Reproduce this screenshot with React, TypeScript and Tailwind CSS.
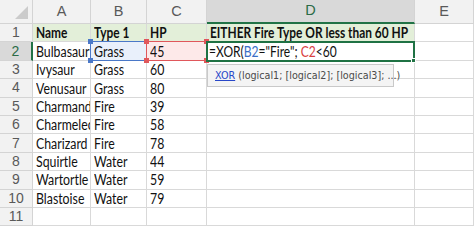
import React from "react";

const rows: [string, string, string, string][] = [
  ["Name", "Type 1", "HP", "EITHER Fire Type OR less than 60 HP"],
  ["Bulbasaur", "Grass", "45", ""],
  ["Ivysaur", "Grass", "60", ""],
  ["Venusaur", "Grass", "80", ""],
  ["Charmander", "Fire", "39", ""],
  ["Charmeleon", "Fire", "58", ""],
  ["Charizard", "Fire", "78", ""],
  ["Squirtle", "Water", "44", ""],
  ["Wartortle", "Water", "59", ""],
  ["Blastoise", "Water", "79", ""],
  ["", "", "", ""],
];

const cellFont = { fontFamily: "Lato, 'Open Sans', sans-serif" };

function Handle({ cls }: { cls: string }) {
  return <div className={`absolute w-[5px] h-[5px] ${cls}`} />;
}

function CellText({ children, bold }: { children: React.ReactNode; bold?: boolean }) {
  return (
    <div className="absolute inset-0 overflow-hidden flex items-center pl-[3px] pt-[1px]">
      <span
        className={`inline-block origin-left whitespace-nowrap text-[14.5px] text-[#111] ${
          bold ? "font-bold scale-x-[0.82]" : "scale-x-[0.85]"
        }`}
        style={cellFont}
      >
        {children}
      </span>
    </div>
  );
}

export default function App() {
  return (
    <div className="w-[474px] h-[226px] overflow-hidden bg-white select-none">
      <div
        className="grid w-[474px]"
        style={{
          gridTemplateColumns: "33px 58px 56px 60px 208px 59px",
          gridTemplateRows: "24px repeat(11, 18.4px)",
        }}
      >
        {/* header row */}
        <div className="relative bg-[#f2f2f2] border-r border-b border-[#d4d4d4]">
          <div className="absolute right-[4px] bottom-[4px] w-0 h-0 border-l-[13px] border-l-transparent border-b-[13px] border-b-[#cbcbcb]" />
        </div>
        {["A", "B", "C", "D", "E"].map((c) => (
          <div
            key={c}
            className={`flex items-center justify-center text-[14.5px] border-r border-[#d4d4d4] ${
              c === "D"
                ? "bg-[#d9d9d9] text-[#2b6b46] border-b-2 border-b-[#217346]"
                : "bg-[#f2f2f2] text-[#595959] border-b border-b-[#d4d4d4]"
            }`}
            style={{ fontFamily: "'Liberation Sans', Arial, sans-serif" }}
          >
            {c}
          </div>
        ))}
        {rows.map((r, i) => {
          const rn = i + 1;
          const isSel = rn === 2;
          return (
            <React.Fragment key={rn}>
              <div
                className={`flex items-center justify-center text-[14px] border-b border-[#d4d4d4] ${
                  isSel
                    ? "bg-[#d9d9d9] text-[#2b6b46] border-r-2 border-r-[#217346]"
                    : "bg-[#f2f2f2] text-[#595959] border-r border-r-[#d4d4d4]"
                }`}
                style={{ fontFamily: "'Liberation Sans', Arial, sans-serif" }}
              >
                {rn}
              </div>
              {r.map((v, j) => {
                const col = j;
                let bg = rn === 1 ? "bg-[#e3efd9]" : "bg-white";
                if (rn === 2 && col === 1) bg = "bg-[#e9f0fb]";
                if (rn === 2 && col === 2) bg = "bg-[#fde9e9]";
                return (
                  <div key={j} className={`relative border-r border-b border-[#d9d9d9] ${bg}`}>
                    {v && <CellText bold={rn === 1}>{v}</CellText>}
                    {rn === 2 && col === 1 && (
                      <div className="absolute -left-px -top-px -right-px -bottom-px border border-[#4a78c8] z-10">
                        <Handle cls="-left-[3px] -top-[3px] bg-[#4a78c8]" />
                        <Handle cls="-right-[3px] -top-[3px] bg-[#4a78c8]" />
                        <Handle cls="-left-[3px] -bottom-[3px] bg-[#4a78c8]" />
                        <Handle cls="-right-[3px] -bottom-[3px] bg-[#4a78c8]" />
                      </div>
                    )}
                    {rn === 2 && col === 2 && (
                      <div className="absolute -left-px -top-px -right-px -bottom-px border border-[#e0575b] z-10">
                        <Handle cls="-left-[3px] -top-[3px] bg-[#e0575b]" />
                        <Handle cls="-right-[3px] -top-[3px] bg-[#e0575b]" />
                        <Handle cls="-left-[3px] -bottom-[3px] bg-[#e0575b]" />
                        <Handle cls="-right-[3px] -bottom-[3px] bg-[#e0575b]" />
                      </div>
                    )}
                    {rn === 2 && col === 3 && (
                      <>
                        <div className="absolute -left-px -top-px -right-px -bottom-[2px] border-2 border-[#1f7244] z-20 bg-white">
                          <div className="absolute inset-0 flex items-center pl-[1px] pt-[1px]">
                            <span
                              className="inline-block origin-left scale-x-[0.83] whitespace-nowrap text-[14.5px] text-[#111]"
                              style={cellFont}
                            >
                              =XOR(<span className="text-[#3b6ec6]">B2</span>="Fire";{" "}
                              <span className="text-[#d9403f]">C2</span>&lt;60
                            </span>
                          </div>
                          <div className="absolute -right-[3px] -bottom-[3px] w-[5px] h-[5px] bg-[#1f7244] border border-white" />
                        </div>
                        <div
                          className="absolute left-0 top-[22px] w-[187px] h-[23px] z-30 flex items-center pl-[7px] bg-[#f4f4f4] border border-[#c9c9c9] text-[9.6px] text-[#4a4a4a] whitespace-nowrap"
                          style={{ fontFamily: "'DejaVu Sans', Verdana, sans-serif" }}
                        >
                          <span className="text-[#2847c8] underline">XOR</span>
                          <span>&nbsp;(logical1; [logical2]; [logical3]; ...)</span>
                        </div>
                      </>
                    )}
                  </div>
                );
              })}
              <div className="border-r border-b border-[#d9d9d9] bg-white" />
            </React.Fragment>
          );
        })}
      </div>
    </div>
  );
}
